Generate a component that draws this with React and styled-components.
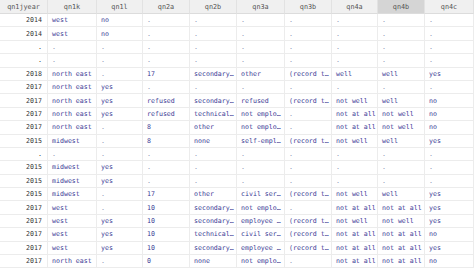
import React from 'react'
import styled, { createGlobalStyle } from 'styled-components'

const GlobalStyle = createGlobalStyle`
  html, body {
    margin: 0;
    padding: 0;
    background: #ffffff;
    overflow: hidden;
  }
`

const columns = ['qn1jyear', 'qn1k', 'qn1l', 'qn2a', 'qn2b', 'qn3a', 'qn3b', 'qn4a', 'qn4b', 'qn4c']
const widths = '48px 49px 46px 47px 47px 48px 47px 46px 47px 49px'
const selected = 'qn4b'

const M = '.'
const empty = [M, M, M, M, M, M, M, M]

const rows = [
  ['2014', 'west', 'no', ...empty.slice(0, 7)],
  ['2014', 'west', 'no', ...empty.slice(0, 7)],
  [M, ...empty, M],
  [M, ...empty, M],
  ['2018', 'north east', M, '17', 'secondary…', 'other', '(record t…', 'well', 'well', 'yes'],
  ['2017', 'north east', 'yes', ...empty.slice(0, 7)],
  ['2017', 'north east', 'yes', 'refused', 'secondary…', 'refused', '(record t…', 'not well', 'well', 'no'],
  ['2017', 'north east', 'yes', 'refused', 'technical…', 'not emplo…', M, 'not at all', 'not well', 'no'],
  ['2017', 'north east', M, '8', 'other', 'not emplo…', M, 'not at all', 'not well', 'no'],
  ['2015', 'midwest', M, '8', 'none', 'self-empl…', '(record t…', 'not well', 'well', 'yes'],
  [M, ...empty, M],
  ['2015', 'midwest', 'yes', ...empty.slice(0, 7)],
  ['2015', 'midwest', 'yes', ...empty.slice(0, 7)],
  ['2015', 'midwest', M, '17', 'other', 'civil ser…', '(record t…', 'not well', 'well', 'yes'],
  ['2017', 'west', M, '10', 'secondary…', 'not emplo…', M, 'not at all', 'not at all', 'yes'],
  ['2017', 'west', 'yes', '10', 'secondary…', 'employee …', '(record t…', 'not well', 'not well', 'yes'],
  ['2017', 'west', 'yes', '10', 'technical…', 'civil ser…', '(record t…', 'not at all', 'not at all', 'no'],
  ['2017', 'west', 'yes', '10', 'secondary…', 'employee …', '(record t…', 'not at all', 'not at all', 'yes'],
  ['2017', 'north east', M, '0', 'none', 'not emplo…', M, 'not at all', 'not at all', 'no'],
]

const App = () => {
  return (
    <Wrapper>
      <GlobalStyle />
      <Grid>
        {columns.map((c) => (
          <HeadCell key={c} $active={c === selected}>{c}</HeadCell>
        ))}
        {rows.map((r, i) =>
          r.map((v, j) => (
            <Cell key={i + '-' + j} $numeric={j === 0} $missing={v === M}>
              {v}
            </Cell>
          ))
        )}
      </Grid>
    </Wrapper>
  )
}

const Wrapper = styled.div`
  width: 474px;
  height: 268px;
  overflow: hidden;
  background: #fff;
`

const Grid = styled.div`
  display: grid;
  grid-template-columns: ${widths};
  grid-template-rows: 14px;
  grid-auto-rows: 13.4px;
  font-family: "DejaVu Sans Mono", "Liberation Mono", monospace;
`

const HeadCell = styled.div`
  display: flex;
  align-items: center;
  justify-content: center;
  background: ${(p) => (p.$active ? '#d5d5d5' : '#f0f0f0')};
  border-right: 1px solid #e2e2e2;
  border-bottom: 1px solid #dcdcdc;
  color: #555;
  font-size: 6.8px;
  box-sizing: border-box;
`

const Cell = styled.div`
  display: flex;
  align-items: center;
  justify-content: ${(p) => (p.$numeric ? 'flex-end' : 'flex-start')};
  padding: ${(p) => (p.$numeric ? '0 5px 0 0' : '0 0 0 4px')};
  border-right: 1px solid #ececec;
  border-bottom: 1px solid #ececec;
  box-sizing: border-box;
  white-space: nowrap;
  overflow: hidden;
  font-size: 6.6px;
  color: ${(p) => (p.$numeric ? '#333' : p.$missing ? '#8a8ab0' : '#3b3b96')};
`

export default App
